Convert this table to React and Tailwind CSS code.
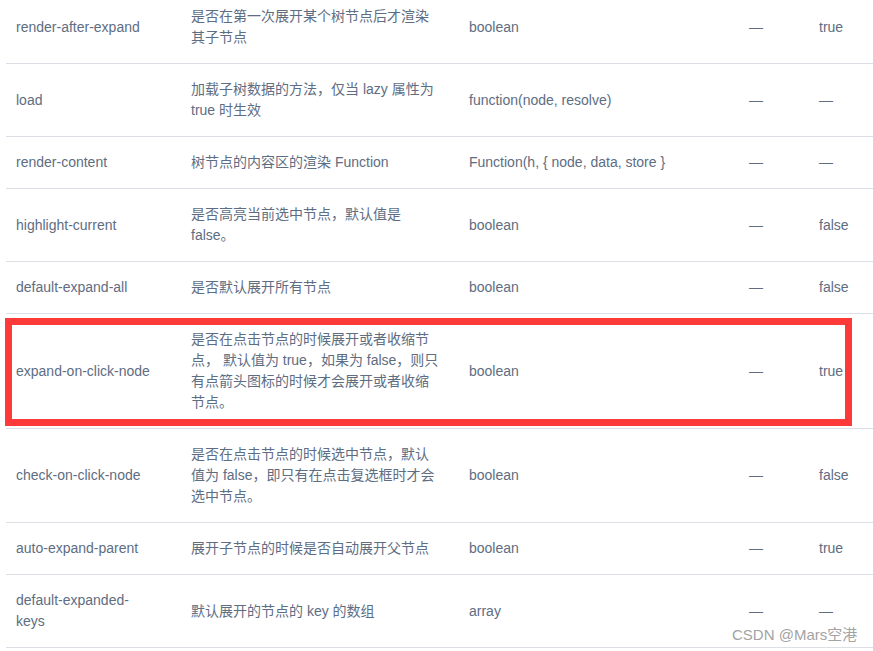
const rows = [
  { name: 'render-after-expand', desc: '是否在第一次展开某个树节点后才渲染其子节点', type: 'boolean', options: '—', def: 'true' },
  { name: 'load', desc: '加载子树数据的方法，仅当 lazy 属性为true 时生效', type: 'function(node, resolve)', options: '—', def: '—' },
  { name: 'render-content', desc: '树节点的内容区的渲染 Function', type: 'Function(h, { node, data, store }', options: '—', def: '—' },
  { name: 'highlight-current', desc: '是否高亮当前选中节点，默认值是 false。', type: 'boolean', options: '—', def: 'false' },
  { name: 'default-expand-all', desc: '是否默认展开所有节点', type: 'boolean', options: '—', def: 'false' },
  { name: 'expand-on-click-node', desc: '是否在点击节点的时候展开或者收缩节点， 默认值为 true，如果为 false，则只有点箭头图标的时候才会展开或者收缩节点。', type: 'boolean', options: '—', def: 'true' },
  { name: 'check-on-click-node', desc: '是否在点击节点的时候选中节点，默认值为 false，即只有在点击复选框时才会选中节点。', type: 'boolean', options: '—', def: 'false' },
  { name: 'auto-expand-parent', desc: '展开子节点的时候是否自动展开父节点', type: 'boolean', options: '—', def: 'true' },
  { name: 'default-expanded-keys', desc: '默认展开的节点的 key 的数组', type: 'array', options: '—', def: '—' },
]

export default function App() {
  return (
    <div className="relative h-[651px] w-[873px] overflow-hidden bg-white">
      <div className="relative -mt-[9px]">
        <table
          className="ml-[6px] w-[867px] table-fixed border-collapse text-[14px] leading-[21px] text-[#5e6d82]"
          style={{ fontFamily: '"Liberation Sans", "Noto Sans CJK SC", sans-serif' }}
        >
          <colgroup>
            <col className="w-[170px]" />
            <col className="w-[278px]" />
            <col className="w-[280px]" />
            <col className="w-[70px]" />
            <col />
          </colgroup>
          <tbody>
            {rows.map((r) => (
              <tr key={r.name} className="border-b border-[#dcdfe6]">
                <td className="py-[15px] pl-[10px] pr-[22px] align-middle break-words">{r.name}</td>
                <td className="py-[15px] pl-[15px] pr-[14px] align-middle">{r.desc}</td>
                <td className="p-[15px] align-middle whitespace-nowrap">{r.type}</td>
                <td className="p-[15px] align-middle">{r.options}</td>
                <td className="py-[15px] pl-[15px] pr-0 align-middle">{r.def}</td>
              </tr>
            ))}
          </tbody>
        </table>

        {/* red highlight annotation */}
        <div className="pointer-events-none absolute left-[5px] top-[327px] h-[108px] w-[847px] border-[7px] border-[#fc3a3a]" />
      </div>

      <div
        className="pointer-events-none absolute left-[732px] top-[625px] text-[15px] leading-[20px] text-[#a3a3a3]"
        style={{ fontFamily: '"Liberation Sans", "Noto Sans CJK SC", sans-serif' }}
      >
        CSDN @Mars空港
      </div>
    </div>
  )
}
